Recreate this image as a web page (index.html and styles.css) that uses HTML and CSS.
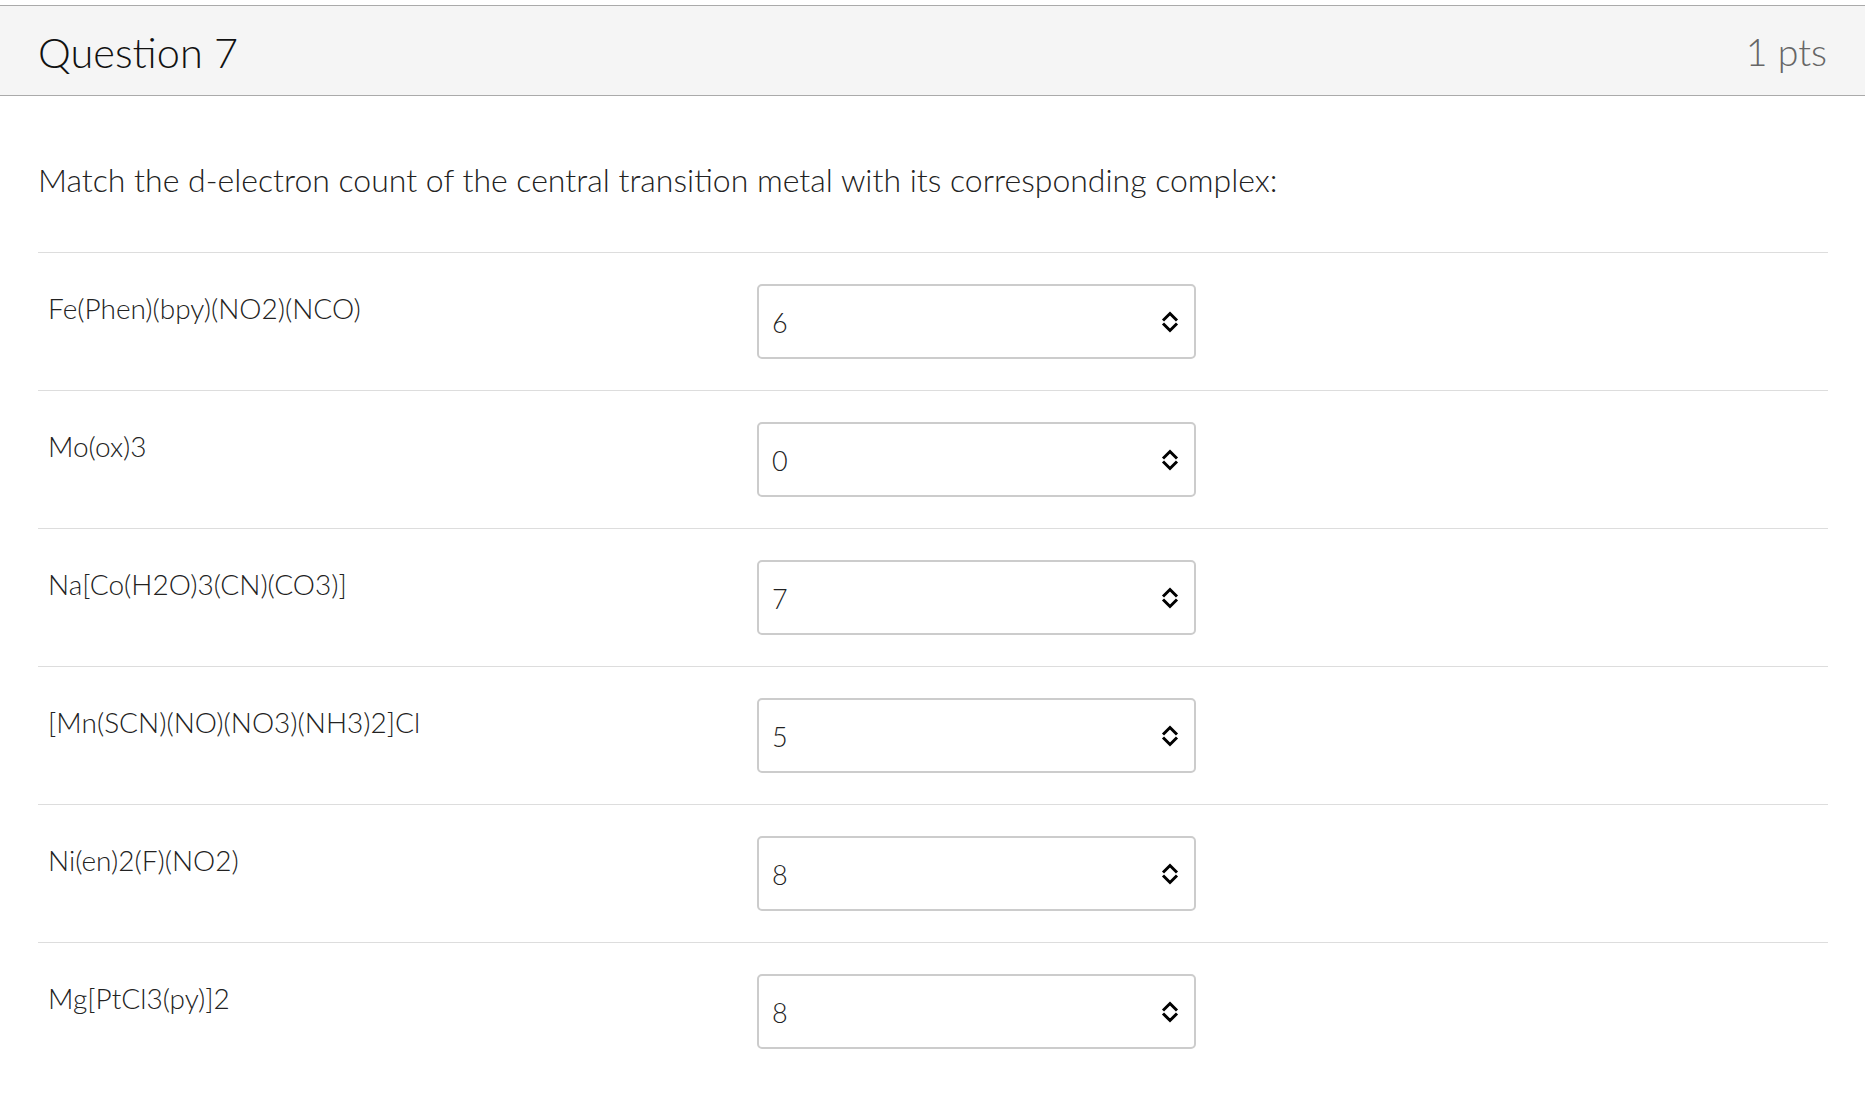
FILE: index.html
```html
<!DOCTYPE html>
<html lang="en">
<head>
<meta charset="utf-8">
<title>Question 7</title>
<link rel="stylesheet" href="styles.css">
</head>
<body>
<div class="question">
  <div class="q-header">
    <h2 class="q-title">Question 7</h2>
    <span class="q-points">1 pts</span>
  </div>
  <div class="q-body">
    <p class="q-text">Match the d-electron count of the central transition metal with its corresponding complex:</p>
    <div class="matches">
      <div class="match-row">
        <div class="match-label">Fe(Phen)(bpy)(NO2)(NCO)</div>
        <div class="select"><span class="select-value">6</span><svg class="select-arrow" width="18" height="22" viewBox="0 0 18 22"><path d="M2 9.5 L9 2.5 L16 9.5 M2 12.5 L9 19.5 L16 12.5" fill="none" stroke="#000" stroke-width="3"/></svg></div>
      </div>
      <div class="match-row">
        <div class="match-label">Mo(ox)3</div>
        <div class="select"><span class="select-value">0</span><svg class="select-arrow" width="18" height="22" viewBox="0 0 18 22"><path d="M2 9.5 L9 2.5 L16 9.5 M2 12.5 L9 19.5 L16 12.5" fill="none" stroke="#000" stroke-width="3"/></svg></div>
      </div>
      <div class="match-row">
        <div class="match-label">Na[Co(H2O)3(CN)(CO3)]</div>
        <div class="select"><span class="select-value">7</span><svg class="select-arrow" width="18" height="22" viewBox="0 0 18 22"><path d="M2 9.5 L9 2.5 L16 9.5 M2 12.5 L9 19.5 L16 12.5" fill="none" stroke="#000" stroke-width="3"/></svg></div>
      </div>
      <div class="match-row">
        <div class="match-label">[Mn(SCN)(NO)(NO3)(NH3)2]Cl</div>
        <div class="select"><span class="select-value">5</span><svg class="select-arrow" width="18" height="22" viewBox="0 0 18 22"><path d="M2 9.5 L9 2.5 L16 9.5 M2 12.5 L9 19.5 L16 12.5" fill="none" stroke="#000" stroke-width="3"/></svg></div>
      </div>
      <div class="match-row">
        <div class="match-label">Ni(en)2(F)(NO2)</div>
        <div class="select"><span class="select-value">8</span><svg class="select-arrow" width="18" height="22" viewBox="0 0 18 22"><path d="M2 9.5 L9 2.5 L16 9.5 M2 12.5 L9 19.5 L16 12.5" fill="none" stroke="#000" stroke-width="3"/></svg></div>
      </div>
      <div class="match-row">
        <div class="match-label">Mg[PtCl3(py)]2</div>
        <div class="select"><span class="select-value">8</span><svg class="select-arrow" width="18" height="22" viewBox="0 0 18 22"><path d="M2 9.5 L9 2.5 L16 9.5 M2 12.5 L9 19.5 L16 12.5" fill="none" stroke="#000" stroke-width="3"/></svg></div>
      </div>
    </div>
  </div>
</div>
</body>
</html>
```
FILE: styles.css
```css
html, body {
  margin: 0;
  padding: 0;
  background: #fff;
}
body {
  font-family: Lato, "Open Sans", sans-serif;
  color: #2d2d2d;
}
.question {
  padding-top: 5px;
}
.q-header {
  display: flex;
  justify-content: space-between;
  align-items: center;
  height: 89px;
  padding: 0 38px 0 38px;
  background: #f5f5f5;
  border-top: 1px solid #aaaaaa;
  border-bottom: 1px solid #aaaaaa;
}
.q-title {
  margin: 2px 0 0 0;
  font-size: 41.5px;
  font-weight: 300;
  color: #111;
}
.q-points {
  margin-top: 2px;
  font-size: 37.5px;
  color: #666;
  font-weight: 300;
}
.q-body {
  padding: 0 37px 0 38px;
}
.q-text {
  margin: 0;
  padding: 64px 0 0 0;
  height: 92px;
  font-size: 32px;
  font-weight: 300;
  line-height: 40px;
  color: #222;
}
.match-row {
  display: flex;
  align-items: flex-start;
  height: 137px;
  border-top: 1px solid #dddddd;
}
.match-label {
  width: 709px;
  padding: 37px 0 0 10px;
  font-size: 28px;
  line-height: 36px;
  font-weight: 300;
  color: #222;
}
.select {
  margin-top: 31px;
  box-sizing: border-box;
  width: 439px;
  height: 75px;
  border: 2px solid #cccccc;
  border-radius: 5px;
  display: flex;
  align-items: center;
  justify-content: space-between;
  padding: 2px 15px 0 13px;
}
.select-value {
  font-size: 27px;
  font-weight: 300;
  color: #222;
}
.select-arrow {
  display: block;
  margin-top: -1px;
}
```
